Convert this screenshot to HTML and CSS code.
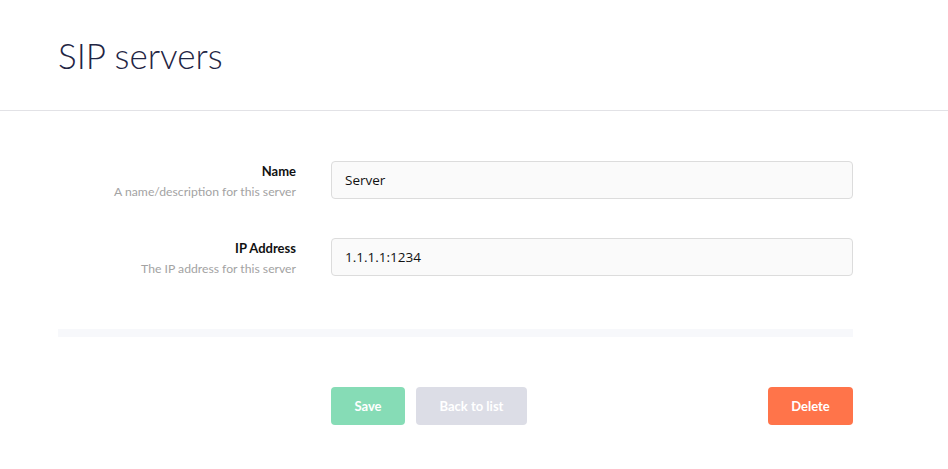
FILE: index.html
```html
<!DOCTYPE html>
<html lang="en">
<head>
  <meta charset="UTF-8" />
  <meta name="viewport" content="width=device-width, initial-scale=1.0"/>
  <title>SIP servers</title>
  <link rel="stylesheet" href="styles.css">
</head>
<body>
  <header class="page-header">
    <h1>SIP servers</h1>
  </header>

  <main class="content">
    <form class="server-form">
      <div class="field">
        <div class="field-label">
          <label for="name">Name</label>
          <span class="hint">A name/description for this server</span>
        </div>
        <input id="name" type="text" value="Server">
      </div>

      <div class="field">
        <div class="field-label">
          <label for="ip">IP Address</label>
          <span class="hint">The IP address for this server</span>
        </div>
        <input id="ip" type="text" value="1.1.1.1:1234">
      </div>

      <div class="divider"></div>

      <!-- Actions -->
      <div class="actions">
        <button type="button" class="btn btn-save">Save</button>
        <button type="button" class="btn btn-back">Back to list</button>
        <button type="button" class="btn btn-delete">Delete</button>
      </div>
    </form>
  </main>
</body>
</html>
```

FILE: styles.css
```css
body {
  margin: 0;
  font-family: Lato, "Open Sans", sans-serif;
  background: #fff;
  color: #1f2544;
}

.page-header {
  height: 111px;
  border-bottom: 1px solid #e2e2e6;
  padding: 0 58px;
  box-sizing: border-box;
}

.page-header h1 {
  margin: 0;
  padding-top: 34px;
  font-size: 35px;
  font-weight: 300;
  line-height: 42px;
  color: #1f2544;
}

.content {
  padding: 50px 95px 0 58px;
}

.field {
  display: flex;
  align-items: flex-start;
  margin-bottom: 38px;
}

.field-label {
  width: 238px;
  margin-right: 35px;
  text-align: right;
  padding-top: 1px;
}

.field-label label {
  display: block;
  font-size: 13px;
  font-weight: 700;
  line-height: 18px;
  color: #111;
}

.hint {
  display: block;
  margin-top: 4px;
  font-size: 12.2px;
  line-height: 16px;
  color: #a3a3a3;
}

.field input {
  flex: 1;
  height: 38px;
  box-sizing: border-box;
  padding: 0 13px;
  border: 1px solid #dcdcdc;
  border-radius: 4px;
  background: #fafafa;
  font-family: "Open Sans", sans-serif;
  font-size: 13.5px;
  color: #111;
}

.divider {
  height: 8px;
  margin-top: 52px;
  background: #f7f8fb;
}

.actions {
  display: flex;
  margin-top: 50px;
  padding-left: 273px;
}

.btn {
  height: 38px;
  padding: 0 22px;
  border: none;
  border-radius: 4px;
  font-family: Lato, sans-serif;
  font-size: 13px;
  font-weight: 700;
  color: #fff;
  margin-right: 11px;
}

.btn-save {
  background: #86dcb6;
  width: 74px;
}

.btn-back {
  background: #dcdde6;
  width: 111px;
}

.btn-delete {
  background: #ff744a;
  width: 85px;
  margin-left: auto;
  margin-right: 0;
}
```
